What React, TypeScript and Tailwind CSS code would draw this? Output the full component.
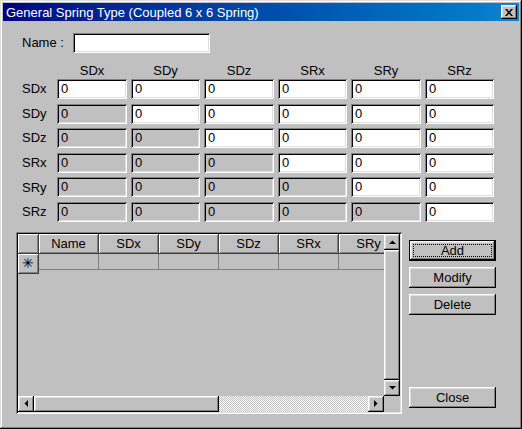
import React from 'react';

const axes = ['SDx', 'SDy', 'SDz', 'SRx', 'SRy', 'SRz'];
const colWidths = ['w-[70px]', 'w-[69px]', 'w-[70px]', 'w-[69px]', 'w-[70px]', 'w-[69px]'];

const raised =
  'shadow-[inset_-1px_-1px_#000,inset_1px_1px_#fff,inset_-2px_-2px_#808080,inset_2px_2px_#dfdfdf]';
const sunken =
  'shadow-[inset_1px_1px_#808080,inset_-1px_-1px_#fff,inset_2px_2px_#000,inset_-2px_-2px_#dfdfdf]';

function Arrow({ dir }: { dir: 'up' | 'down' | 'left' | 'right' }) {
  const pts = {
    up: '0,4 7,4 3.5,0.5',
    down: '0,0 7,0 3.5,3.5',
    left: '4,0 4,7 0.5,3.5',
    right: '0,0 0,7 3.5,3.5',
  }[dir];
  const vertical = dir === 'up' || dir === 'down';
  return (
    <svg width={vertical ? 7 : 4} height={vertical ? 4 : 7} viewBox={vertical ? '0 0 7 4' : '0 0 4 7'}>
      <polygon points={pts} fill="#000" />
    </svg>
  );
}

function ScrollBtn({ dir }: { dir: 'up' | 'down' | 'left' | 'right' }) {
  return (
    <div className={`w-[16px] h-[16px] shrink-0 bg-[#c0c0c0] flex items-center justify-center ${raised}`}>
      <Arrow dir={dir} />
    </div>
  );
}

function Field({ enabled, w }: { enabled: boolean; w: string }) {
  return (
    <div className={`${w} h-[20px] pl-[4px] pt-[2px] leading-[15px] ${enabled ? 'bg-white' : 'bg-[#c0c0c0]'} ${sunken}`}>
      0
    </div>
  );
}

function Button({ label, isDefault }: { label: string; isDefault?: boolean }) {
  if (isDefault) {
    return (
      <div className="w-[87px] h-[21px] border border-black bg-[#c0c0c0]">
        <div className={`w-full h-full flex p-[3px] ${raised}`}>
          <div className="flex-1 border border-dotted border-black flex items-center justify-center leading-none">
            {label}
          </div>
        </div>
      </div>
    );
  }
  return (
    <div className={`w-[87px] h-[21px] bg-[#c0c0c0] flex items-center justify-center ${raised}`}>{label}</div>
  );
}

const headCell = 'h-[20px] shrink-0 flex items-center justify-center border-r border-b border-[#404040] shadow-[inset_1px_1px_#fff,inset_-1px_-1px_#808080]';

export default function App() {
  return (
    <div className="w-[522px] h-[429px] bg-[#c0c0c0] p-[3px] flex flex-col text-[13px] text-black font-['Liberation_Sans',Arial,sans-serif] shadow-[inset_-1px_-1px_#000,inset_1px_1px_#dfdfdf,inset_-2px_-2px_#808080,inset_2px_2px_#fff] overflow-hidden select-none">
      {/* Title bar */}
      <div className="h-[18px] shrink-0 flex items-center justify-between pl-[3px] pr-[2px] bg-gradient-to-r from-[#000080] to-[#1084d0]">
        <span className="text-white text-[13px] leading-none">General Spring Type (Coupled 6 x 6 Spring)</span>
        <div className={`w-[16px] h-[14px] bg-[#c0c0c0] flex items-center justify-center ${raised}`}>
          <svg width="8" height="7" viewBox="0 0 8 7">
            <path d="M0 0h2l2 2.5L6 0h2L5 3.5 8 7H6L4 4.5 2 7H0l3-3.5z" fill="#000" />
          </svg>
        </div>
      </div>

      {/* Name */}
      <div className="flex items-center mt-[12px] pl-[19px] h-[20px]">
        <span className="w-[51px]">Name :</span>
        <div className={`w-[137px] h-[20px] bg-white ${sunken}`} />
      </div>

      {/* Matrix */}
      <div className="flex gap-x-[4px] mt-[10px] h-[16px] items-center">
        <div className="w-[50px]" />
        {axes.map((a, i) => (
          <div key={a} className={`${colWidths[i]} text-center`}>{a}</div>
        ))}
      </div>
      <div className="flex flex-col gap-y-[4.6px]">
        {axes.map((row, r) => (
          <div key={row} className="flex gap-x-[4px] items-center">
            <div className="w-[50px] pl-[19px]">{row}</div>
            {axes.map((c, i) => (
              <Field key={c} enabled={i >= r} w={colWidths[i]} />
            ))}
          </div>
        ))}
      </div>

      {/* Bottom */}
      <div className="flex mt-[10px] ml-[13px]">
        <div className={`w-[386px] h-[182px] p-[2px] flex flex-col bg-[#c0c0c0] ${sunken}`}>
          <div className="flex flex-1 min-h-0">
            <div className="w-[366px] overflow-hidden flex flex-col">
              <div className="flex">
                <div className={`${headCell} w-[21px]`} />
                {['Name', 'SDx', 'SDy', 'SDz', 'SRx', 'SRy'].map((h) => (
                  <div key={h} className={`${headCell} w-[60px]`}>{h}</div>
                ))}
              </div>
              <div className="flex">
                <div className={`${headCell} w-[21px] h-[16px] text-[14px]`}>✳</div>
                {[0, 1, 2, 3, 4, 5].map((k) => (
                  <div key={k} className="w-[60px] h-[16px] shrink-0 border-r border-b border-[#808080]" />
                ))}
              </div>
            </div>
            <div className="w-[16px] flex flex-col">
              <ScrollBtn dir="up" />
              <div className={`flex-1 bg-[#c0c0c0] ${raised}`} />
              <ScrollBtn dir="down" />
            </div>
          </div>
          <div className="flex h-[16px]">
            <ScrollBtn dir="left" />
            <div className={`w-[185px] bg-[#c0c0c0] ${raised}`} />
            <div className="flex-1 bg-[image:repeating-conic-gradient(#c0c0c0_0%_25%,#fff_0%_50%)] bg-[length:2px_2px]" />
            <ScrollBtn dir="right" />
            <div className="w-[16px] bg-[#c0c0c0]" />
          </div>
        </div>

        <div className="flex flex-col ml-[7px]">
          <div className="mt-[8px]"><Button label="Add" isDefault /></div>
          <div className="mt-[6px]"><Button label="Modify" /></div>
          <div className="mt-[6px]"><Button label="Delete" /></div>
          <div className="mt-auto mb-[6px]"><Button label="Close" /></div>
        </div>
      </div>
    </div>
  );
}
